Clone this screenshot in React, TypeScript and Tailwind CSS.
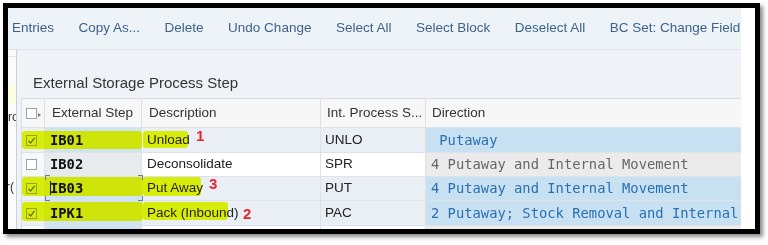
import React from "react";

const sans = "font-['Liberation_Sans',Arial,sans-serif]";
const mono = "font-['DejaVu_Sans_Mono',monospace]";

type Row = {
  sel: boolean;
  step: string;
  desc: string;
  ip: string;
  dir: string;
  h: string;
};

const rows: Row[] = [
  { sel: true, step: "IB01", desc: "Unload", ip: "UNLO", dir: " Putaway", h: "h-[25px]" },
  { sel: false, step: "IB02", desc: "Deconsolidate", ip: "SPR", dir: "4 Putaway and Internal Movement", h: "h-[24px]" },
  { sel: true, step: "IB03", desc: "Put Away", ip: "PUT", dir: "4 Putaway and Internal Movement", h: "h-[24px]" },
  { sel: true, step: "IPK1", desc: "Pack (Inbound)", ip: "PAC", dir: "2 Putaway; Stock Removal and Internal", h: "h-[25px]" },
];

const toolbar = [
  "Entries",
  "Copy As...",
  "Delete",
  "Undo Change",
  "Select All",
  "Select Block",
  "Deselect All",
  "BC Set: Change Field Values",
];

function Check({ checked }: { checked: boolean }) {
  return (
    <div className="w-[11px] h-[11px] border border-[#9ea3a8] bg-white flex items-center justify-center">
      {checked && (
        <svg width="9" height="9" viewBox="0 0 9 9">
          <path d="M1.5 4.8 L3.6 7 L7.6 1.8" stroke="#4d6a12" strokeWidth="1.3" fill="none" />
        </svg>
      )}
    </div>
  );
}

export default function App() {
  return (
    <div className={`relative w-[768px] h-[245px] bg-white overflow-hidden ${sans}`}>
      {/* framed screenshot */}
      <div className="ml-[3px] mt-[3px] w-[757px] h-[231px] border-[5px] border-black bg-white shadow-[3px_3px_4px_rgba(0,0,0,0.45)] flex">
        <div className="w-[733px] h-full flex flex-col overflow-hidden">
          {/* toolbar */}
          <div className="h-[42px] shrink-0 bg-[#eef3f8] border-b border-[#dbe5ee] flex items-center pl-[4px] gap-[24.5px] whitespace-nowrap text-[13.5px] text-[#3d6389] overflow-hidden">
            {toolbar.map((t) => (
              <span key={t}>{t}</span>
            ))}
          </div>
          {/* panel */}
          <div className="flex-1 flex min-h-0">
            {/* left clipped strip */}
            <div className="w-[9px] shrink-0 bg-[#fbfbfb] border-r border-[#c9d1d9] flex flex-col overflow-hidden text-[12px] text-[#333]">
              <div className="h-[7px] shrink-0 border-b border-[#e3e6ea]" />
              <div className="h-[28px] shrink-0" />
              <div className="h-[20px] shrink-0 bg-[#fdfde2]" />
              <div className="h-[6px] shrink-0" />
              <div className="h-[12px] shrink-0 leading-[12px] whitespace-nowrap">ro</div>
              <div className="h-[54px] shrink-0" />
              <div className="h-[20px] shrink-0 leading-[20px] -ml-[2px] whitespace-nowrap">r(</div>
            </div>
            {/* main */}
            <div className="flex-1 bg-[#eff3f7] pl-[4px] flex flex-col min-w-0">
              <div className="h-[48px] shrink-0 pt-[24px] pl-[12px] text-[15px] leading-[18px] text-[#333]">
                External Storage Process Step
              </div>
              <div className="flex-1 border-l border-t border-[#d7dde3] overflow-hidden">
                {/* header */}
                <div className="grid grid-cols-[23px_97px_179px_105px_315px] h-[29px] bg-[#f7f7f7] border-b border-[#dde2e7] text-[13.5px] text-[#333] whitespace-nowrap">
                  <div className="border-r border-[#dcdfe3] flex items-center pl-[4px]">
                    <div className="w-[11px] h-[11px] border border-[#9ea3a8] bg-white" />
                    <div className="w-0 h-0 border-y-[2px] border-y-transparent border-l-[3px] border-l-[#777] ml-[1px] mt-[4px]" />
                  </div>
                  <div className="border-r border-[#dcdfe3] flex items-center pl-[7px]">External Step</div>
                  <div className="border-r border-[#dcdfe3] flex items-center pl-[7px]">Description</div>
                  <div className="border-r border-[#dcdfe3] flex items-center pl-[6px]">Int. Process S...</div>
                  <div className="flex items-center pl-[6px]">Direction</div>
                </div>
                {rows.map((r) => (
                  <div
                    key={r.step}
                    className={`grid grid-cols-[23px_97px_179px_105px_315px] ${r.h} border-b border-[#dde3ea] whitespace-nowrap`}
                  >
                    <div className={`border-r border-[#dde2e7] flex items-center pl-[4px] ${r.sel ? "bg-[#edf1f5]" : "bg-[#f7f8f9]"}`}>
                      <Check checked={r.sel} />
                    </div>
                    <div
                      className={`border-r border-[#dde2e7] flex items-center pl-[5px] text-[13.8px] font-semibold text-[#111] ${mono} ${
                        r.sel ? "bg-[#cfe4f3]" : "bg-[#e8ebee]"
                      }`}
                    >
                      {r.step}
                    </div>
                    <div className={`border-r border-[#dde2e7] flex items-center pl-[5px] text-[13.5px] text-[#222] ${r.sel ? "bg-[#e9eff5]" : "bg-white"}`}>
                      {r.desc}
                    </div>
                    <div className={`border-r border-[#dde2e7] flex items-center pl-[4px] text-[13.5px] text-[#222] ${r.sel ? "bg-[#e9eff5]" : "bg-white"}`}>
                      {r.ip}
                    </div>
                    <div
                      className={`flex items-center pl-[5px] text-[13.8px] whitespace-pre overflow-hidden ${mono} ${
                        r.sel ? "bg-[#c7e1f3] text-[#2a6fb0]" : "bg-[#ebebeb] text-[#666]"
                      }`}
                    >
                      {r.dir}
                    </div>
                  </div>
                ))}
                <div className="grid grid-cols-[23px_97px_179px_105px_315px] h-[6px]">
                  <div className="bg-[#f7f8f9] border-r border-[#dde2e7]" />
                  <div className="bg-[#cfe4f3] border-r border-[#dde2e7]" />
                  <div className="bg-white border-r border-[#dde2e7]" />
                  <div className="bg-white border-r border-[#dde2e7]" />
                  <div className="bg-[#ebebeb]" />
                </div>
              </div>
            </div>
          </div>
        </div>
        <div className="flex-1 bg-white" />
      </div>

      {/* annotation overlays: yellow highlighter */}
      <div className="absolute left-[22px] top-[131px] w-[120px] h-[18px] rounded-[3px] bg-[#d6ec0a] mix-blend-darken" />
      <div className="absolute left-[143px] top-[131px] w-[45px] h-[17px] rounded-[3px] bg-[#d6ec0a] mix-blend-darken" />
      <div className="absolute left-[22px] top-[177px] w-[121px] h-[19px] rounded-[3px] bg-[#d6ec0a] mix-blend-darken" />
      <div className="absolute left-[143px] top-[177px] w-[58px] h-[19px] rounded-[3px] bg-[#d6ec0a] mix-blend-darken" />
      <div className="absolute left-[22px] top-[202px] w-[121px] h-[19px] rounded-[3px] bg-[#d6ec0a] mix-blend-darken" />
      <div className="absolute left-[143px] top-[202px] w-[85px] h-[18px] rounded-[3px] bg-[#d6ec0a] mix-blend-darken" />

      {/* red numbers */}
      <span className="absolute left-[196px] top-[128px] text-[15px] leading-[16px] font-bold text-[#e8242c]">1</span>
      <span className="absolute left-[209px] top-[176px] text-[15px] leading-[16px] font-bold text-[#e8242c]">3</span>
      <span className="absolute left-[243px] top-[206px] text-[15px] leading-[16px] font-bold text-[#e8242c]">2</span>

      {/* focus bracket on IB03 */}
      <div className="absolute left-[45px] top-[175px] w-[5px] h-[5px] border-l border-t border-[#5f7f9f]" />
      <div className="absolute left-[138px] top-[175px] w-[5px] h-[5px] border-r border-t border-[#5f7f9f]" />
      <div className="absolute left-[45px] top-[196px] w-[5px] h-[5px] border-l border-b border-[#5f7f9f]" />
      <div className="absolute left-[138px] top-[196px] w-[5px] h-[5px] border-r border-b border-[#5f7f9f]" />
      <div className="absolute left-[50px] top-[181px] w-[1px] h-[14px] bg-[#222]" />
    </div>
  );
}
